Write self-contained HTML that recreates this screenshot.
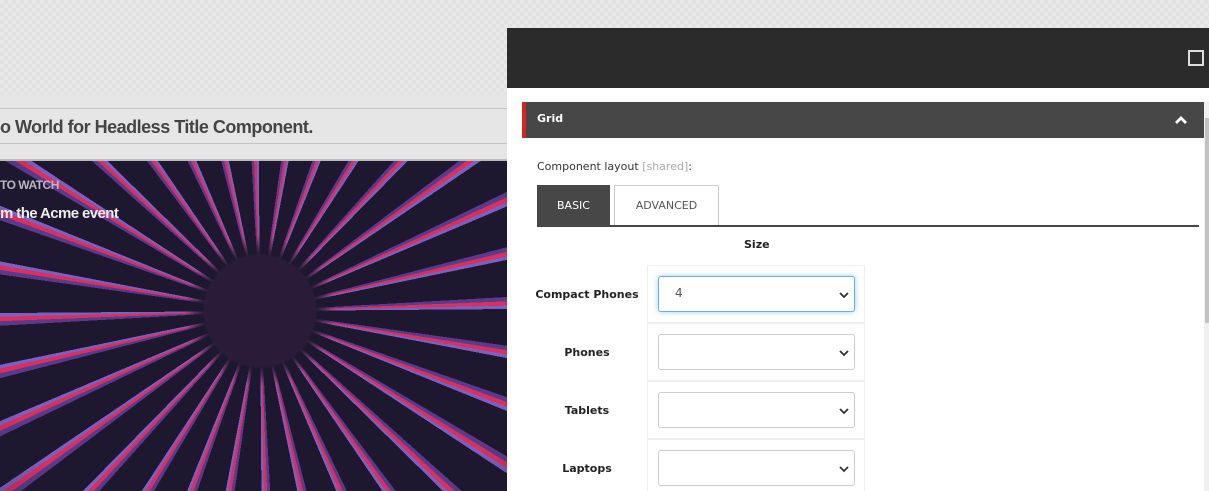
<!DOCTYPE html>
<html><head><style>
*{margin:0;padding:0;box-sizing:border-box}
html,body{width:1209px;height:491px;overflow:hidden}
body{position:relative;font-family:"Liberation Sans",sans-serif;background:#e6e6e6}
.a{position:absolute}
.chk{left:0;top:0;width:1209px;height:95px;background-color:#e9e9e9;background-image:linear-gradient(45deg,#e2e2e2 25%,transparent 25%,transparent 75%,#e2e2e2 75%),linear-gradient(45deg,#e2e2e2 25%,transparent 25%,transparent 75%,#e2e2e2 75%);background-size:8px 8px;background-position:0 0,4px 4px}
.img{left:0;top:161px;width:507px;height:330px;overflow:hidden;background:#1d1730}
.rays{left:-240px;top:-350px;width:1000px;height:1000px;background:repeating-conic-gradient(from 3deg,#1d1730 0deg 5deg,#5a3a8a 5deg 6deg,#d83060 6deg 7deg,#7a60c0 7deg 7.8deg,#1d1730 7.8deg 11.25deg)}
.fade{left:-240px;top:-350px;width:1000px;height:1000px;background:radial-gradient(circle at 50% 50%,#2a1c38 0,#2a1c38 55px,rgba(29,23,48,.85) 58px,rgba(29,23,48,0) 75px,rgba(29,23,48,0) 260px,rgba(29,23,48,.5) 420px)}
.sel{position:absolute;left:658px;width:197px;height:36px;border:1px solid #ccc;border-radius:3px;background:#fff;font-family:"DejaVu Sans",sans-serif;font-size:12px;color:#555;padding:9px 0 0 16px}
.sel svg{position:absolute;right:5px;top:14px}
.lbl{position:absolute;font-family:"DejaVu Sans",sans-serif;font-weight:bold;font-size:11px;color:#222;width:110px;text-align:center;left:532px}
.cell{position:absolute;left:647px;width:218px;height:58px;border:1px solid #f0f0f0}
</style></head><body>
<div class="a chk"></div>
<div class="a" style="left:0;top:108px;width:507px;height:1px;background:#c4c4c4"></div>
<div class="a" style="left:0;top:143px;width:507px;height:1px;background:#c4c4c4"></div>
<div class="a" style="left:0;top:117px;font-weight:bold;font-size:18px;color:#444;letter-spacing:-0.5px">o World for Headless Title Component.</div>
<div class="a" style="left:0;top:159px;width:507px;height:2px;background:#bbb"></div>
<div class="a img"><div class="a rays"></div><div class="a fade"></div>
<div class="a" style="left:0;top:17px;font-weight:bold;font-size:12px;color:#b8b8c0;letter-spacing:-0.5px">TO WATCH</div>
<div class="a" style="left:0;top:44px;font-weight:bold;font-size:15px;color:#eee;letter-spacing:-0.6px">m the Acme event</div>
</div>
<div class="a" style="left:507px;top:28px;width:702px;height:463px;background:#fff"></div>
<div class="a" style="left:507px;top:28px;width:702px;height:60px;background:#2b2b2b"></div>
<div class="a" style="left:1188px;top:50px;width:16px;height:16px;border:2px solid #ddd"></div>
<div class="a" style="left:522px;top:102px;width:682px;height:36px;background:#474747;border-left:4px solid #d8241c"></div>
<div class="a" style="left:537px;top:112px;font-family:'DejaVu Sans',sans-serif;font-weight:bold;font-size:11px;color:#fff">Grid</div>
<svg class="a" style="left:1174px;top:114px" width="14" height="12" viewBox="0 0 14 12"><path d="M2 9L7 4L12 9" stroke="#fff" stroke-width="2.8" fill="none"/></svg>
<div class="a" style="left:1204px;top:102px;width:5px;height:389px;background:#f0f0f0"></div>
<div class="a" style="left:1205px;top:118px;width:4px;height:205px;background:#c3c3c3"></div>
<div class="a" style="left:537px;top:160px;font-family:'DejaVu Sans',sans-serif;font-size:11px;color:#333">Component layout <span style="color:#aaa">[shared]</span>:</div>
<div class="a" style="left:537px;top:185px;width:73px;height:41px;background:#474747;color:#fff;font-family:'DejaVu Sans',sans-serif;font-size:11px;text-align:center;line-height:41px">BASIC</div>
<div class="a" style="left:614px;top:185px;width:105px;height:41px;border:1px solid #ccc;border-bottom:none;color:#555;font-family:'DejaVu Sans',sans-serif;font-size:11px;text-align:center;line-height:40px">ADVANCED</div>
<div class="a" style="left:537px;top:225px;width:662px;height:2px;background:#474747"></div>
<div class="a" style="left:744px;top:238px;font-family:'DejaVu Sans',sans-serif;font-weight:bold;font-size:11px;color:#222">Size</div>
<div class="cell" style="top:265px"></div><div class="cell" style="top:323px"></div><div class="cell" style="top:381px"></div><div class="cell" style="top:439px;height:52px;border-bottom:none"></div>
<div class="lbl" style="top:288px">Compact Phones</div>
<div class="lbl" style="top:346px">Phones</div>
<div class="lbl" style="top:404px">Tablets</div>
<div class="lbl" style="top:462px">Laptops</div>
<div class="sel" style="top:276px;border-color:#66afe9;box-shadow:0 0 6px rgba(102,175,233,.6)">4<svg width="10" height="8" viewBox="0 0 10 8"><path d="M1 2L5 6L9 2" stroke="#333" stroke-width="1.8" fill="none"/></svg></div>
<div class="sel" style="top:334px"><svg width="10" height="8" viewBox="0 0 10 8"><path d="M1 2L5 6L9 2" stroke="#333" stroke-width="1.8" fill="none"/></svg></div>
<div class="sel" style="top:392px"><svg width="10" height="8" viewBox="0 0 10 8"><path d="M1 2L5 6L9 2" stroke="#333" stroke-width="1.8" fill="none"/></svg></div>
<div class="sel" style="top:450px"><svg width="10" height="8" viewBox="0 0 10 8"><path d="M1 2L5 6L9 2" stroke="#333" stroke-width="1.8" fill="none"/></svg></div>
</body></html>
